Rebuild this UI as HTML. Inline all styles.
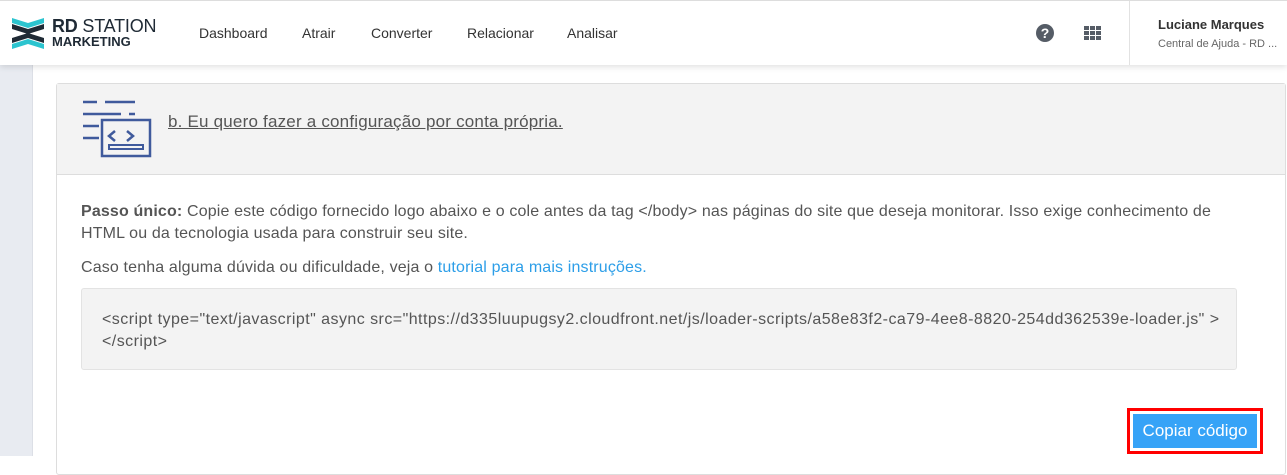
<!DOCTYPE html>
<html><head><meta charset="utf-8"><style>
body{margin:0;width:1287px;height:456px;overflow:hidden;background:#fff;font-family:"Liberation Sans",sans-serif;position:relative}
.top{position:absolute;left:0;top:0;width:1287px;height:64px;background:#fff;border-top:1px solid #ddd;box-shadow:0 2px 6px rgba(0,0,0,.12);z-index:2}
.nav{position:absolute;top:24px;font-size:14px;color:#333}
.side{position:absolute;left:0;top:64px;width:32px;height:392px;background:#e8ebf1;border-right:1px solid #dcdfe6}
.card{position:absolute;left:56px;top:83px;width:1228px;height:390px;border:1px solid #ddd;border-radius:3px}
.ch{height:90px;background:#f3f3f3;border-bottom:1px solid #ddd;position:relative}
p{margin:0;font-size:16px;letter-spacing:.15px;color:#555;line-height:22px}
</style></head><body>
<div class="top">
<svg style="position:absolute;left:11px;top:16px" width="34" height="33" viewBox="0 0 34 33">
<path d="M1 1 L17 6 L33 1 L33 6 L17 11 L1 6Z" fill="#2cc4cf"/>
<path d="M1 7 L17 12 L33 7 L33 12 L17 17 L1 12Z" fill="#1f2a35"/>
<path d="M1 21 L17 16 L33 21 L33 26 L17 21 L1 26Z" fill="#1f2a35"/>
<path d="M1 27 L17 22 L33 27 L33 32 L17 27 L1 32Z" fill="#2cc4cf"/>
</svg>
<div style="position:absolute;left:52px;top:15px;font-size:18px;font-weight:bold;color:#1f2a35;letter-spacing:-.2px">RD <span style="font-weight:normal">STATION</span></div>
<div style="position:absolute;left:52px;top:33px;font-size:13px;font-weight:bold;color:#1f2a35">MARKETING</div>
<div class="nav" style="left:199px">Dashboard</div>
<div class="nav" style="left:302px">Atrair</div>
<div class="nav" style="left:371px">Converter</div>
<div class="nav" style="left:467px">Relacionar</div>
<div class="nav" style="left:567px">Analisar</div>
<div style="position:absolute;left:1036px;top:23px;width:18px;height:18px;border-radius:50%;background:#555c66;color:#fff;font-size:14px;font-weight:bold;text-align:center;line-height:18px">?</div>
<svg style="position:absolute;left:1084px;top:25px" width="18" height="15" viewBox="0 0 18 15" fill="#555c66"><rect x="0" y="0" width="5" height="4"/><rect x="6" y="0" width="5" height="4"/><rect x="12" y="0" width="5" height="4"/><rect x="0" y="5" width="5" height="4"/><rect x="6" y="5" width="5" height="4"/><rect x="12" y="5" width="5" height="4"/><rect x="0" y="10" width="5" height="4"/><rect x="6" y="10" width="5" height="4"/><rect x="12" y="10" width="5" height="4"/></svg>
<div style="position:absolute;left:1129px;top:0;width:1px;height:64px;background:#e2e2e2"></div>
<div style="position:absolute;left:1158px;top:16px;font-size:13px;font-weight:bold;color:#333">Luciane Marques</div>
<div style="position:absolute;left:1158px;top:37px;font-size:11px;color:#666">Central de Ajuda - RD ...</div>
</div>
<div class="side"></div>
<div class="card">
<div class="ch">
<svg style="position:absolute;left:24px;top:16px" width="72" height="60" viewBox="0 0 72 60" fill="none" stroke="#3f5a9c" stroke-width="2.5">
<path d="M2 2h14M24 2h30M2 14h38M48 14h6M2 26h16M2 38h16"/>
<rect x="21" y="20" width="48" height="36"/>
<path d="M34 31l-6 5 6 5M46 31l6 5-6 5" stroke-width="2.5"/>
<rect x="28" y="45" width="34" height="4" stroke-width="2"/>
</svg>
<div style="position:absolute;left:111px;top:28px;font-size:17px;letter-spacing:.2px;color:#555;text-decoration:underline">b. Eu quero fazer a configuração por conta própria.</div>
</div>
<div style="position:absolute;left:24px;top:117px;width:1160px">
<p><b>Passo único:</b> Copie este código fornecido logo abaixo e o cole antes da tag &lt;/body&gt; nas páginas do site que deseja monitorar. Isso exige conhecimento de HTML ou da tecnologia usada para construir seu site.</p>
<p style="margin-top:12px">Caso tenha alguma dúvida ou dificuldade, veja o <span style="color:#2c9ee8">tutorial para mais instruções.</span></p>
</div>
<div style="position:absolute;left:24px;top:204px;width:1156px;height:82px;background:#f3f3f3;border:1px solid #e3e3e3;border-radius:3px;padding:0 0 0 20px;box-sizing:border-box">
<p style="margin-top:20px;letter-spacing:.45px">&lt;script type="text/javascript" async src="https://d335luupugsy2.cloudfront.net/js/loader-scripts/a58e83f2-ca79-4ee8-8820-254dd362539e-loader.js" &gt;<br>&lt;/script&gt;</p>
</div>
<div style="position:absolute;left:1070px;top:324px;width:136px;height:46px;border:3px solid #f00;box-sizing:border-box">
<div style="position:absolute;left:3px;top:3px;width:124px;height:34px;background:#36a3f7;color:#fff;font-size:17px;text-align:center;line-height:34px">Copiar código</div>
</div>
</div>
</body></html>
